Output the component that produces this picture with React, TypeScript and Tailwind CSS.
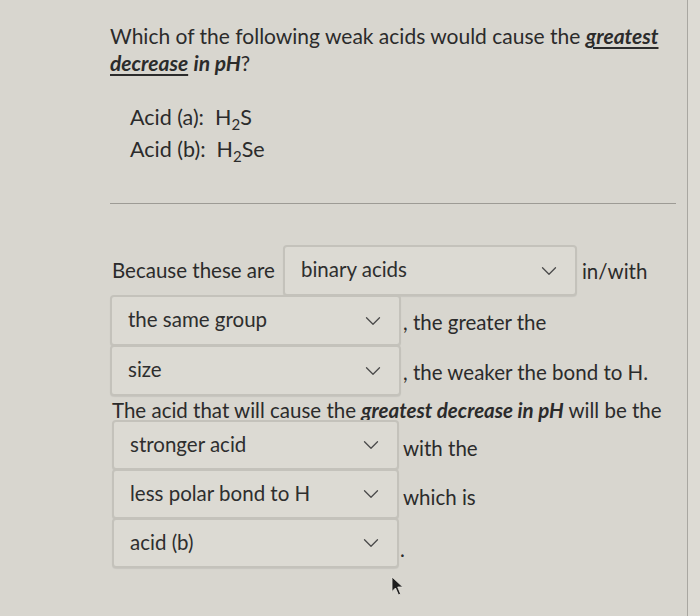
import { ChevronDown } from 'lucide-react';

type Choice = { value: string; width: string; height?: string };

const Select = ({ value, width, height = 'h-[51px]' }: Choice) => (
  <div
    className={`${width} ${height} shrink-0 flex items-center justify-between pl-[16px] pr-[13px] rounded-[4px] border-2 border-[#c4c2bb] bg-[#dcdad3] shadow-[0_1px_1px_rgba(0,0,0,0.08)]`}
  >
    <span className="text-[20.5px] text-[#2e2e2e] -mt-[2px]">{value}</span>
    <ChevronDown size={26} strokeWidth={1.2} className="text-[#4a4a4a]" />
  </div>
);

const Sub = ({ children }: { children: string }) => (
  <span className="text-[15px] leading-[0] relative top-[5px]">{children}</span>
);

export default function App() {
  return (
    <div
      className="w-[700px] h-[616px] overflow-hidden bg-[#d8d6cf] flex text-[#2b2b2b]"
      style={{ fontFamily: 'Lato, "Open Sans", sans-serif' }}
    >
      <main className="relative w-[688px] h-full border-r border-[#a9a7a1] pl-[110px] pr-[8px] pt-[22px]">
        <h1 className="text-[21px] leading-[27px]">
          Which of the following weak acids would cause the{' '}
          <span className="font-bold italic underline underline-offset-[3px] decoration-[1.5px]">greatest</span>
          <br />
          <span className="font-bold italic underline underline-offset-[3px] decoration-[1.5px]">decrease</span>{' '}
          <span className="font-bold italic">in pH</span>?
        </h1>

        <div className="pl-[20px] pt-[25px] text-[21.5px] leading-[32px]">
          <p>
            Acid (a):&nbsp; H<Sub>2</Sub>S
          </p>
          <p>
            Acid (b):&nbsp; H<Sub>2</Sub>Se
          </p>
        </div>

        <hr className="mt-[38px] w-[566px] border-t-[1.5px] border-[#9d9b95]" />

        <div className="mt-[41px] text-[20.5px]">
          <div className="flex items-center">
            <span className="ml-[2px] mr-[8px]">Because these are</span>
            <Select value="binary acids" width="w-[294px]" />
            <span className="ml-[5px] mt-[2px]">in/with</span>
          </div>

          <div className="flex items-center -mt-px">
            <Select value="the same group" width="w-[291px]" />
            <span className="ml-[2px] mt-[4px]">, the greater the</span>
          </div>

          <div className="flex items-center -mt-px">
            <Select value="size" width="w-[291px]" />
            <span className="ml-[2px] mt-[4px]">, the weaker the bond to H.</span>
          </div>

          <p className="ml-[2px] mt-[2px] leading-[24px]">
            The acid that will cause the <span className="font-bold italic">greatest decrease in pH</span> will be the
          </p>

          <div className="flex items-center -mt-[2px] ml-[2px]">
            <Select value="stronger acid" width="w-[287px]" height="h-[50px]" />
            <span className="ml-[4px] mt-[6px]">with the</span>
          </div>

          <div className="flex items-center -mt-px ml-[2px]">
            <Select value="less polar bond to H" width="w-[287px]" height="h-[50px]" />
            <span className="ml-[4px] mt-[6px]">which is</span>
          </div>

          <div className="flex items-center -mt-px ml-[2px]">
            <Select value="acid (b)" width="w-[287px]" height="h-[50px]" />
            <span className="ml-[1px] mt-[12px]">.</span>
          </div>
        </div>

        {/* mouse pointer */}
        <svg
          className="absolute left-[391px] top-[576px]"
          width="14"
          height="21"
          viewBox="0 0 14 21"
        >
          <path d="M1 1 L1 15.5 L4.5 12 L7.5 19 L9.6 18 L6.7 11 L11.8 11 Z" fill="#1e1e1e" stroke="#e8e6e0" strokeWidth="0.8" />
        </svg>
      </main>
      <div className="flex-1 bg-[#dddbd4]" />
    </div>
  );
}
